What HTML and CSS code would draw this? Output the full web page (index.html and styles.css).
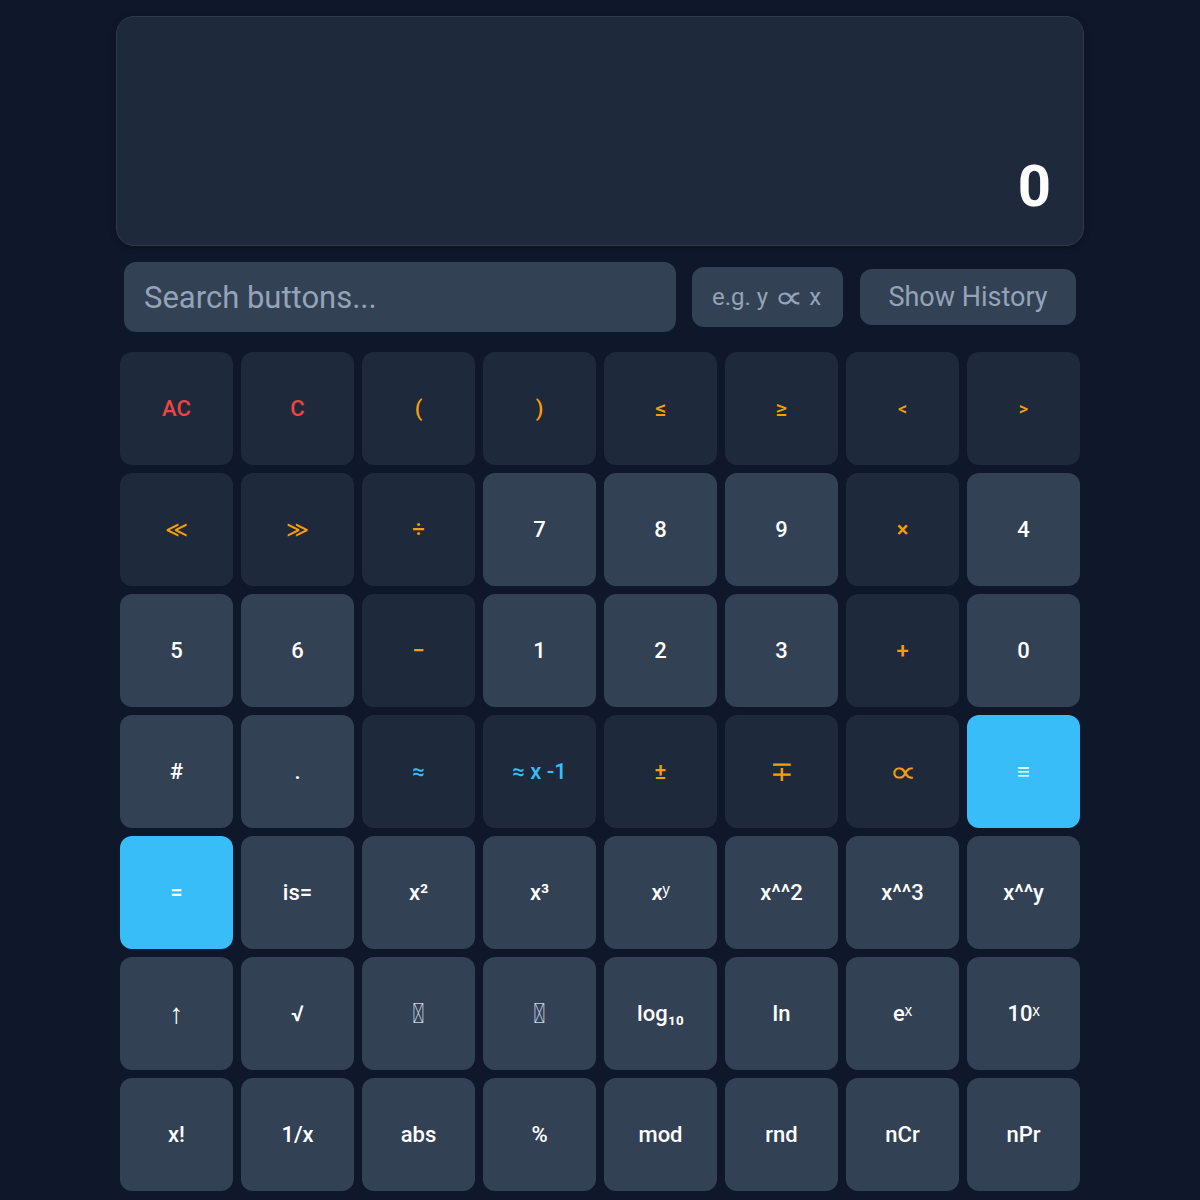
FILE: index.html
```html
<!DOCTYPE html>
<html lang="en">
<head>
    <meta charset="UTF-8">
    <meta name="viewport" content="width=device-width, initial-scale=1.0">
    <title>Calculator</title>
    <link rel="stylesheet" href="styles.css">
</head>
<body>
    <div class="calculator">
        <!-- Display -->
        <div class="display">
            <div class="display-value">0</div>
        </div>

        <!-- Search / hints / history -->
        <div class="toolbar">
            <input type="text" class="search" placeholder="Search buttons...">
            <div class="hint">e.g. y <span class="prop">∝</span> x</div>
            <button class="history-btn">Show History</button>
        </div>

        <!-- Keypad -->
        <div class="keypad">
            <button class="key dark clear">AC</button>
            <button class="key dark clear">C</button>
            <button class="key dark op">(</button>
            <button class="key dark op">)</button>
            <button class="key dark op">≤</button>
            <button class="key dark op">≥</button>
            <button class="key dark op small">&lt;</button>
            <button class="key dark op small">&gt;</button>

            <button class="key dark op thin">≪</button>
            <button class="key dark op thin">≫</button>
            <button class="key dark op">÷</button>
            <button class="key">7</button>
            <button class="key">8</button>
            <button class="key">9</button>
            <button class="key dark op">×</button>
            <button class="key">4</button>

            <button class="key">5</button>
            <button class="key">6</button>
            <button class="key dark op">−</button>
            <button class="key">1</button>
            <button class="key">2</button>
            <button class="key">3</button>
            <button class="key dark op">+</button>
            <button class="key">0</button>

            <button class="key">#</button>
            <button class="key">.</button>
            <button class="key dark approx">≈</button>
            <button class="key dark approx">≈ x -1</button>
            <button class="key dark op">±</button>
            <button class="key dark op thin big">∓</button>
            <button class="key dark op thin"><span class="prop">∝</span></button>
            <button class="key accent thin">≡</button>

            <button class="key accent">=</button>
            <button class="key">is=</button>
            <button class="key">x²</button>
            <button class="key">x³</button>
            <button class="key">xʸ</button>
            <button class="key">x^^2</button>
            <button class="key">x^^3</button>
            <button class="key">x^^y</button>

            <button class="key thin big">↑</button>
            <button class="key">√</button>
            <button class="key missing">&#xE000;</button>
            <button class="key missing">&#xE001;</button>
            <button class="key">log₁₀</button>
            <button class="key">ln</button>
            <button class="key">eˣ</button>
            <button class="key">10ˣ</button>

            <button class="key">x!</button>
            <button class="key">1/x</button>
            <button class="key">abs</button>
            <button class="key">%</button>
            <button class="key">mod</button>
            <button class="key">rnd</button>
            <button class="key">nCr</button>
            <button class="key">nPr</button>
        </div>
    </div>
</body>
</html>
```

FILE: styles.css
```css
/* General styling */
* {
    margin: 0;
    padding: 0;
    box-sizing: border-box;
}
body {
    font-family: Roboto, "Liberation Sans", sans-serif;
    background-color: #0f172a;
    color: #fff;
}
.calculator {
    width: 968px;
    margin: 0 auto;
    padding-top: 16px;
}

/* the proportional sign is drawn wide */
.prop {
    display: inline-block;
    font-size: 1.35em;
    font-weight: 400;
    line-height: 1;
    transform: scaleX(1.3);
    margin: 0 3px;
}

/* Display */
.display {
    height: 230px;
    background-color: #1e293b;
    border: 1px solid #2e3a4e;
    border-radius: 18px;
    display: flex;
    flex-direction: column;
    justify-content: flex-end;
    align-items: flex-end;
    padding: 0 32px 26px;
    box-shadow: 0 2px 6px rgba(0, 0, 0, 0.25);
}
.display-value {
    font-size: 58px;
    font-weight: 700;
    line-height: 1.1;
}

/* Toolbar */
.toolbar {
    display: flex;
    align-items: center;
    gap: 16px;
    padding: 0 8px;
    margin-top: 16px;
}
.search {
    width: 552px;
    height: 70px;
    background-color: #334155;
    border: none;
    border-radius: 12px;
    padding: 0 20px;
    font-family: inherit;
    font-size: 31px;
    color: #e2e8f0;
    outline: none;
}
.search::placeholder {
    color: #94a3b8;
}
.hint {
    height: 60px;
    width: 151px;
    display: flex;
    align-items: center;
    gap: 6px;
    padding: 0 20px;
    background-color: #334155;
    border-radius: 12px;
    color: #94a3b8;
    font-size: 24px;
    white-space: nowrap;
}
.history-btn {
    height: 56px;
    width: 216px;
    margin-left: 1px;
    background-color: #334155;
    border: none;
    border-radius: 12px;
    color: #94a3b8;
    font-family: inherit;
    font-size: 27px;
    cursor: pointer;
}

/* Keypad */
.keypad {
    display: grid;
    grid-template-columns: repeat(8, 1fr);
    gap: 8px;
    margin: 20px 4px 0;
}
.key {
    aspect-ratio: 1;
    background-color: #334155;
    border: none;
    border-radius: 12px;
    color: #fff;
    font-family: inherit;
    font-size: 22px;
    font-weight: 500;
    cursor: pointer;
}
.key.dark {
    background-color: #1e293b;
}
.key.op {
    color: #f59e0b;
}
.key.small {
    font-size: 18px;
}
.key.thin {
    font-weight: 400;
}
.key.big {
    font-size: 28px;
}
.key.clear {
    color: #ef4444;
}
.key.approx {
    color: #38bdf8;
}
.key.accent {
    background-color: #38bdf8;
    color: #fff;
}
.key.missing {
    font-weight: 400;
    font-size: 28px;
    color: #cbd5e1;
}
```
